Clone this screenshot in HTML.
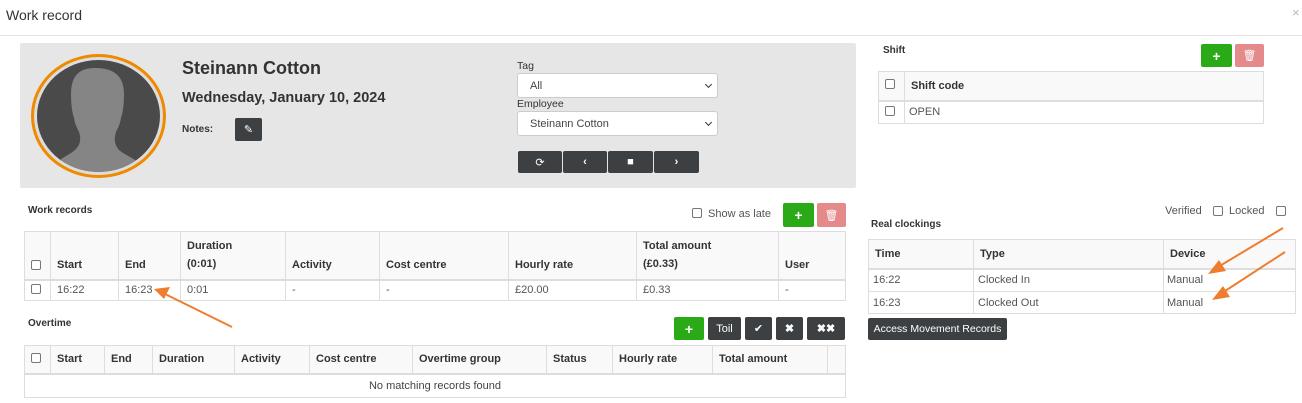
<!DOCTYPE html><html><head><style>
*{box-sizing:border-box;margin:0;padding:0}
body{width:1302px;height:403px;background:#fff;font-family:"Liberation Sans",sans-serif;color:#333;position:relative;overflow:hidden;font-size:11px}
.a{position:absolute}
.b{font-weight:bold}
.btn{position:absolute;background:#3d4043;color:#fff;border-radius:2px;display:flex;align-items:center;justify-content:center;font-size:11px}
.g{background:#2aaa16}.r{background:#e48a8a}
table{position:absolute;border-collapse:collapse;font-size:11px;border:1px solid #ddd}
td,th{border-left:1px solid #ddd;text-align:left;padding:0 6px;font-weight:normal}
th{font-weight:bold;background:#f9f9f9;border-bottom:2px solid #ddd;color:#333}
td{border-top:1px solid #ddd;color:#555}
.cb{display:inline-block;width:10px;height:10px;border:1px solid #777;border-radius:2px;background:#fff}
.sel{position:absolute;background:#fff;border:1px solid #ccc;border-radius:3px;font-size:11px;padding-left:12px;color:#444;display:flex;align-items:center}
.sel:after{content:"";position:absolute;right:6px;top:8px;width:4px;height:4px;border-right:1.5px solid #333;border-bottom:1.5px solid #333;transform:rotate(45deg)}
</style></head><body>
<div class="a" style="left:6px;top:7px;font-size:14px;color:#333">Work record</div>
<div class="a" style="left:1292px;top:5px;font-size:13px;color:#bbb">×</div>
<div class="a" style="left:0;top:35px;width:1302px;height:1px;background:#e5e5e5"></div>

<div class="a" style="left:20px;top:43px;width:836px;height:145px;background:#e6e6e6;border-radius:2px"></div>
<div class="a" style="left:31px;top:54px;width:135px;height:124px;border-radius:50%;border:3px solid #ef8a00;background:#ddd"></div>
<div class="a" style="left:37px;top:60px;width:123px;height:112px;border-radius:50%;background:#4a4a4a;overflow:hidden">
<svg width="123" height="112" viewBox="0 0 123 112"><path d="M58 8c-16 0-24 8-24 26 0 10 1 18 3 24 1 6 3 10 5 14 2 6 2 12-4 18-6 5-14 8-20 14l-2 8h92l-4-8c-8-6-16-9-22-14-5-6-5-12-3-18 2-4 4-8 5-14 2-6 3-14 3-24 0-18-10-26-29-26z" fill="#858585"/></svg></div>
<div class="a b" style="left:182px;top:58px;font-size:18px">Steinann Cotton</div>
<div class="a b" style="left:182px;top:90px;font-size:14.5px">Wednesday, January 10, 2024</div>
<div class="a b" style="left:182px;top:124px;font-size:10px">Notes:</div>
<div class="btn" style="left:235px;top:118px;width:27px;height:23px">✎</div>
<div class="a" style="left:517px;top:60px;font-size:10.5px">Tag</div>
<div class="sel" style="left:517px;top:73px;width:201px;height:25px">All</div>
<div class="a" style="left:517px;top:98px;font-size:10.5px">Employee</div>
<div class="sel" style="left:517px;top:111px;width:201px;height:25px">Steinann Cotton</div>
<div class="btn" style="left:518px;top:151px;width:44px;height:22px">⟳</div>
<div class="btn" style="left:563px;top:151px;width:44px;height:22px;font-weight:bold">‹</div>
<div class="btn" style="left:608px;top:151px;width:45px;height:22px">■</div>
<div class="btn" style="left:654px;top:151px;width:45px;height:22px;font-weight:bold">›</div>

<div class="a b" style="left:28px;top:205px;font-size:10px">Work records</div>
<span class="cb a" style="left:692px;top:208px"></span>
<div class="a" style="left:708px;top:208px;color:#555">Show as late</div>
<div class="btn g" style="left:783px;top:203px;width:31px;height:24px;font-weight:bold;font-size:14px">+</div>
<div class="btn r" style="left:817px;top:203px;width:29px;height:24px">🗑</div>
<table style="left:24px;top:231px;width:822px">
<colgroup><col width="26"><col width="68"><col width="62"><col width="105"><col width="94"><col width="129"><col width="128"><col width="142"><col></colgroup>
<tr style="height:48px"><th style="vertical-align:bottom;padding-bottom:6px"><span class="cb"></span></th><th style="vertical-align:bottom;padding-bottom:8px">Start</th><th style="vertical-align:bottom;padding-bottom:8px">End</th><th style="line-height:18px">Duration<br>(0:01)</th><th style="vertical-align:bottom;padding-bottom:8px">Activity</th><th style="vertical-align:bottom;padding-bottom:8px">Cost centre</th><th style="vertical-align:bottom;padding-bottom:8px">Hourly rate</th><th style="line-height:18px">Total amount<br>(£0.33)</th><th style="vertical-align:bottom;padding-bottom:8px">User</th></tr>
<tr style="height:21px"><td><span class="cb"></span></td><td>16:22</td><td>16:23</td><td>0:01</td><td>-</td><td>-</td><td>£20.00</td><td>£0.33</td><td>-</td></tr></table>

<div class="a b" style="left:28px;top:318px;font-size:10px">Overtime</div>
<div class="btn g" style="left:674px;top:317px;width:30px;height:23px;font-weight:bold;font-size:14px">+</div>
<div class="btn" style="left:708px;top:317px;width:33px;height:23px">Toil</div>
<div class="btn" style="left:745px;top:317px;width:27px;height:23px">✔</div>
<div class="btn" style="left:776px;top:317px;width:27px;height:23px;font-weight:bold">✖</div>
<div class="btn" style="left:807px;top:317px;width:38px;height:23px;font-weight:bold">✖✖</div>
<table style="left:24px;top:345px;width:822px">
<colgroup><col width="26"><col width="54"><col width="48"><col width="82"><col width="75"><col width="103"><col width="134"><col width="66"><col width="100"><col width="115"><col></colgroup>
<tr style="height:28px"><th><span class="cb"></span></th><th>Start</th><th>End</th><th>Duration</th><th>Activity</th><th>Cost centre</th><th>Overtime group</th><th>Status</th><th>Hourly rate</th><th>Total amount</th><th></th></tr>
<tr style="height:24px"><td colspan="11" style="text-align:center;color:#444">No matching records found</td></tr></table>

<div class="a b" style="left:883px;top:45px;font-size:10px">Shift</div>
<div class="btn g" style="left:1201px;top:44px;width:31px;height:23px;font-weight:bold;font-size:14px">+</div>
<div class="btn r" style="left:1235px;top:44px;width:29px;height:23px">🗑</div>
<table style="left:878px;top:71px;width:386px">
<colgroup><col width="26"><col></colgroup>
<tr style="height:29px"><th><span class="cb"></span></th><th>Shift code</th></tr>
<tr style="height:23px"><td><span class="cb"></span></td><td style="padding-left:4px">OPEN</td></tr></table>

<div class="a" style="left:1165px;top:205px;color:#555">Verified</div>
<span class="cb a" style="left:1213px;top:206px"></span>
<div class="a" style="left:1229px;top:205px;color:#555">Locked</div>
<span class="cb a" style="left:1276px;top:206px"></span>
<div class="a b" style="left:871px;top:219px;font-size:10px">Real clockings</div>
<table style="left:868px;top:239px;width:428px">
<colgroup><col width="105"><col width="190"><col></colgroup>
<tr style="height:29px"><th>Time</th><th>Type</th><th>Device</th></tr>
<tr style="height:23px"><td style="padding-left:4px">16:22</td><td style="padding-left:4px">Clocked In</td><td style="padding-left:3px">Manual</td></tr>
<tr style="height:22px"><td style="padding-left:4px">16:23</td><td style="padding-left:4px">Clocked Out</td><td style="padding-left:3px">Manual</td></tr></table>
<div class="btn" style="left:868px;top:318px;width:139px;height:22px;font-size:10.5px">Access Movement Records</div>

<svg class="a" style="left:0;top:0" width="1302" height="403">
<g stroke="#ef7d2f" stroke-width="2" fill="#ef7d2f">
<line x1="232" y1="327" x2="163" y2="293"/><polygon points="154,289 170,287 164,299" stroke="none"/>
<line x1="1283" y1="228" x2="1218" y2="267"/><polygon points="1208,274 1219,260 1226,271" stroke="none"/>
<line x1="1285" y1="252" x2="1222" y2="293"/><polygon points="1212,300 1223,286 1230,297" stroke="none"/>
</g></svg>
</body></html>
